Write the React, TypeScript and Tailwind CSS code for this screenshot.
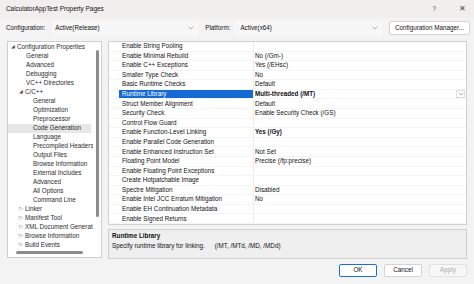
const treeItems: { label: string; indent: number; arrow?: "open" | "closed"; selected?: boolean }[] = [
  { label: "Configuration Properties", indent: 0, arrow: "open" },
  { label: "General", indent: 1 },
  { label: "Advanced", indent: 1 },
  { label: "Debugging", indent: 1 },
  { label: "VC++ Directories", indent: 1 },
  { label: "C/C++", indent: 1, arrow: "open" },
  { label: "General", indent: 2 },
  { label: "Optimization", indent: 2 },
  { label: "Preprocessor", indent: 2 },
  { label: "Code Generation", indent: 2, selected: true },
  { label: "Language", indent: 2 },
  { label: "Precompiled Headers", indent: 2 },
  { label: "Output Files", indent: 2 },
  { label: "Browse Information", indent: 2 },
  { label: "External Includes", indent: 2 },
  { label: "Advanced", indent: 2 },
  { label: "All Options", indent: 2 },
  { label: "Command Line", indent: 2 },
  { label: "Linker", indent: 1, arrow: "closed" },
  { label: "Manifest Tool", indent: 1, arrow: "closed" },
  { label: "XML Document Generatc", indent: 1, arrow: "closed" },
  { label: "Browse Information", indent: 1, arrow: "closed" },
  { label: "Build Events", indent: 1, arrow: "closed" },
];

const rows: [string, string, boolean?][] = [
  ["Enable String Pooling", ""],
  ["Enable Minimal Rebuild", "No (/Gm-)"],
  ["Enable C++ Exceptions", "Yes (/EHsc)"],
  ["Smaller Type Check", "No"],
  ["Basic Runtime Checks", "Default"],
  ["Runtime Library", "Multi-threaded (/MT)", true],
  ["Struct Member Alignment", "Default"],
  ["Security Check", "Enable Security Check (/GS)"],
  ["Control Flow Guard", ""],
  ["Enable Function-Level Linking", "Yes (/Gy)", true],
  ["Enable Parallel Code Generation", ""],
  ["Enable Enhanced Instruction Set", "Not Set"],
  ["Floating Point Model", "Precise (/fp:precise)"],
  ["Enable Floating Point Exceptions", ""],
  ["Create Hotpatchable Image", ""],
  ["Spectre Mitigation", "Disabled"],
  ["Enable Intel JCC Erratum Mitigation", "No"],
  ["Enable EH Continuation Metadata", ""],
  ["Enable Signed Returns", ""],
];

const Chevron = () => (
  <svg width="6" height="4" viewBox="0 0 6 4" className="shrink-0">
    <path d="M0.8 0.8 L3 3 L5.2 0.8" fill="none" stroke="#9a9a9a" strokeWidth="0.8" />
  </svg>
);

const App = () => {
  return (
    <div className="w-[474px] h-[284px] overflow-hidden bg-[#f3f3f3] text-[#111] font-['Liberation_Sans',sans-serif] text-[6.3px] leading-none flex flex-col">
      {/* title bar */}
      <div className="h-[18px] shrink-0 bg-[#f3eeee] flex items-center pl-[6px] pr-[8px]">
        <span className="text-[6.4px]">CalculatorAppTest Property Pages</span>
        <span className="ml-auto text-[6.4px] text-[#444]">?</span>
        <span className="ml-[23px] text-[8px] text-[#444]">✕</span>
      </div>

      {/* configuration row */}
      <div className="mt-[2px] h-[16px] shrink-0 flex items-center pl-[6px] pr-[4px]">
        <span>Configuration:</span>
        <div className="ml-[7px] w-[147px] h-[15px] bg-[#f7f7f7] flex items-center pl-[3px] pr-[5px]">
          <span>Active(Release)</span>
          <span className="ml-auto"><Chevron /></span>
        </div>
        <span className="ml-[6px]">Platform:</span>
        <div className="ml-[4px] w-[149px] h-[15px] bg-[#f7f7f7] flex items-center pl-[6px] pr-[5px]">
          <span>Active(x64)</span>
          <span className="ml-auto"><Chevron /></span>
        </div>
        <div className="ml-auto w-[81px] h-[14px] bg-white border border-[#d4d4d4] rounded-[2px] flex items-center justify-center">
          Configuration Manager...
        </div>
      </div>

      {/* main */}
      <div className="mt-[5px] flex pl-[7px] pr-[7px] gap-[6px]">
        {/* tree */}
        <div className="w-[95px] h-[217px] shrink-0 bg-white border border-[#cfcfcf] flex flex-col overflow-hidden">
          <div className="flex flex-1 min-h-0">
            <div className="flex-1 pt-[1px] overflow-hidden text-[#2b2b2b]">
              {treeItems.map((t, i) => (
                <div
                  key={i}
                  className={`h-[9px] flex items-center whitespace-nowrap mr-[2px] ${t.selected ? "bg-[#e6e6e6]" : ""}`}
                >
                  <span className={`shrink-0 ${t.indent === 0 ? "w-[3px]" : t.indent === 1 ? "w-[11px]" : "w-[25px]"}`} />
                  {t.arrow ? (
                    <span className="w-[6px] shrink-0 text-[4.5px] text-[#555]">{t.arrow === "open" ? "◢" : "▷"}</span>
                  ) : t.indent === 1 ? (
                    <span className="w-[7px] shrink-0" />
                  ) : null}
                  <span>{t.label}</span>
                </div>
              ))}
            </div>
            <div className="w-[8px] shrink-0 flex justify-center">
              <div className="mt-[8px] w-[3px] h-[167px] rounded-full bg-[#8c8c8c]" />
            </div>
          </div>
          <div className="h-[6px] shrink-0 flex items-start">
            <div className="ml-[8px] w-[67px] h-[2.5px] rounded-full bg-[#8c8c8c]" />
          </div>
        </div>

        {/* right column */}
        <div className="flex-1 flex flex-col">
          <div className="h-[184px] bg-white border border-[#cfcfcf] overflow-hidden">
            {rows.map(([name, value, bold], i) => {
              const selected = i === 5;
              return (
                <div key={i} className="h-[9.58px] flex border-b border-[#f5f5f5]">
                  <div className="w-[10px] shrink-0" />
                  <div
                    className={`w-[134px] shrink-0 flex items-center pl-[3px] whitespace-nowrap ${selected ? "bg-[#1469d2] text-white" : ""}`}
                  >
                    {name}
                  </div>
                  <div className="flex-1 flex items-center pl-[1px] border-l border-[#ececec] whitespace-nowrap">
                    <span className={bold ? "font-bold" : ""}>{value}</span>
                    {selected && (
                      <div className="ml-auto mr-[1px] w-[9px] h-[8px] border border-[#dcdcdc] bg-white flex items-center justify-center">
                        <Chevron />
                      </div>
                    )}
                  </div>
                </div>
              );
            })}
          </div>
          <div className="mt-[4px] h-[30px] bg-[#efefef] border border-[#d0d0d0] px-[3px] pt-[3px]">
            <div className="font-bold">Runtime Library</div>
            <div className="mt-[4px] flex whitespace-nowrap">
              <span>Specify runtime library for linking.</span>
              <span className="ml-[10px]">(/MT, /MTd, /MD, /MDd)</span>
            </div>
          </div>
        </div>
      </div>

      {/* buttons */}
      <div className="mt-[5px] flex justify-end gap-[7px] pr-[7px]">
        <div className="w-[38px] h-[13px] bg-white border border-[#1a6fd2] rounded-[2px] flex items-center justify-center">OK</div>
        <div className="w-[38px] h-[13px] bg-white border border-[#d4d4d4] rounded-[2px] flex items-center justify-center">Cancel</div>
        <div className="w-[38px] h-[13px] bg-[#f7f7f7] border border-[#e2e2e2] rounded-[2px] flex items-center justify-center text-[#a8a8a8]">Apply</div>
      </div>
    </div>
  );
};

export default App;
